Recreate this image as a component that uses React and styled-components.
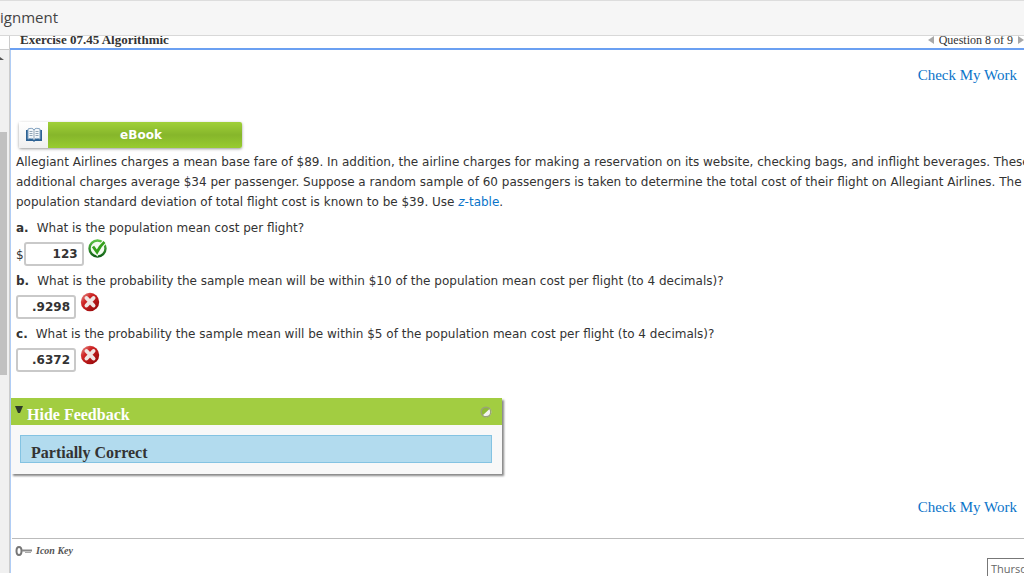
import React, { useState } from 'react';
import styled, { createGlobalStyle } from 'styled-components';

const questions = [
  {
    id: 'a',
    text: 'What is the population mean cost per flight?',
    prefix: '$',
    value: '123',
    correct: true,
  },
  {
    id: 'b',
    text: 'What is the probability the sample mean will be within $10 of the population mean cost per flight (to 4 decimals)?',
    value: '.9298',
    correct: false,
  },
  {
    id: 'c',
    text: 'What is the probability the sample mean will be within $5 of the population mean cost per flight (to 4 decimals)?',
    value: '.6372',
    correct: false,
  },
];

const BookIcon = () => (
  <svg width="18" height="16" viewBox="0 0 18 16" aria-hidden="true">
    <path d="M1 3h2v9h5l1 1 1-1h5V3h2v11h-7l-1 1-1-1H1z" fill="#2d6294" />
    <path d="M3 2c3-1 5-1 6 1 1-2 3-2 6-1v10c-3-1-5-1-6 1-1-2-3-2-6-1z" fill="#f4f7fa" stroke="#7fa0bf" />
    <path d="M9 3v9M4.500 4.500h3M4.500 6.500h3M4.500 8.500h3M10.500 4.500h3M10.500 6.500h3M10.500 8.500h3" stroke="#93a5b6" fill="none" />
  </svg>
);

const CorrectIcon = () => (
  <svg width="20" height="20" viewBox="0 0 20 20" role="img" aria-label="Correct">
    <defs>
      <linearGradient id="ring" x1="0" y1="0" x2="0" y2="1">
        <stop offset="0" stopColor="#5bc144" />
        <stop offset="1" stopColor="#116017" />
      </linearGradient>
    </defs>
    <circle cx="9.500" cy="9.500" r="8" fill="#f5fbf3" stroke="url(#ring)" strokeWidth="2.400" />
    <path d="M5.500 8 9 13Q12 7 16.500 3" fill="none" stroke="#f5fbf3" strokeWidth="5" />
    <path d="M5 7.500 9 13Q12 7 16.500 3" fill="none" stroke="#35a01b" strokeWidth="2.800" />
  </svg>
);

const IncorrectIcon = () => (
  <svg width="20" height="20" viewBox="0 0 20 20" role="img" aria-label="Incorrect">
    <defs>
      <linearGradient id="ball" x1="0" y1="0" x2="1" y2="1">
        <stop offset="0" stopColor="#e9a09c" />
        <stop offset="0.35" stopColor="#cf2525" />
        <stop offset="1" stopColor="#8c0305" />
      </linearGradient>
    </defs>
    <circle cx="10" cy="10" r="9.200" fill="url(#ball)" />
    <path d="M6.500 6l7 7.500M13.500 6l-7 7.500" stroke="#f0e6e4" strokeWidth="4" strokeLinecap="round" />
  </svg>
);

const PartialIcon = () => (
  <svg width="12" height="12" viewBox="0 0 12 12" aria-hidden="true">
    <circle cx="6" cy="6" r="5" fill="#8dba35" />
    <path d="M10 2.500A5 5 0 0 1 2.500 9.500z" fill="#f3f3f0" />
    <circle cx="6" cy="6" r="4.800" fill="none" stroke="#99a377" strokeWidth="1.400" />
  </svg>
);

const KeyIcon = () => (
  <svg width="18" height="12" viewBox="0 0 18 12" aria-hidden="true">
    <ellipse cx="4" cy="6" rx="2.500" ry="4" fill="#fff" stroke="#777" strokeWidth="2" />
    <path d="M7 5.500h10" stroke="#888" strokeWidth="2" fill="none" />
    <path d="M10 7.500h6" stroke="#aaa" fill="none" />
  </svg>
);

const Arrow = ({ flip }) => (
  <svg width="6" height="8" viewBox="0 0 6 8" aria-hidden="true">
    <path d={flip ? 'M0 0v8l6-4z' : 'M6 0v8L0 4z'} fill="#a8a8a8" />
  </svg>
);

const App = () => {
  const [answers, setAnswers] = useState(
    Object.fromEntries(questions.map((q) => [q.id, q.value]))
  );
  const [open, setOpen] = useState(true);

  return (
    <Page>
      <GlobalStyle />
      <TopBar>ignment</TopBar>
      <Main>
        <Rail>
          <RailHead />
          <ScrollTrack>
            <svg width="4" height="3" viewBox="0 0 4 3" aria-hidden="true">
              <path d="M0 0 4 3H0z" fill="#555" />
            </svg>
            <Thumb />
          </ScrollTrack>
        </Rail>
        <Content>
          <QuestionHeader>
            <Exercise>Exercise 07.45 Algorithmic</Exercise>
            <Pager>
              <Arrow />
              <span>Question 8 of 9</span>
              <Arrow flip />
            </Pager>
          </QuestionHeader>
          <Body>
            <CheckRow>
              <CheckLink href="#check">Check My Work</CheckLink>
            </CheckRow>
            <Problem>
              <EbookButton type="button">
                <EbookIcon>
                  <BookIcon />
                </EbookIcon>
                <EbookLabel>eBook</EbookLabel>
              </EbookButton>
              <Paragraph>
                Allegiant Airlines charges a mean base fare of $89. In addition, the airline charges for making a
                reservation on its website, checking bags, and inflight beverages. These
                <br />
                additional charges average $34 per passenger. Suppose a random sample of 60 passengers is taken to
                determine the total cost of their flight on Allegiant Airlines. The
                <br />
                population standard deviation of total flight cost is known to be $39. Use{' '}
                <TextLink href="#z-table">
                  <i>z</i>-table
                </TextLink>
                .
              </Paragraph>
              {questions.map((q) => (
                <Question key={q.id}>
                  <QuestionLabel htmlFor={q.id}>
                    <b>{q.id}.</b>
                    <span>{q.text}</span>
                  </QuestionLabel>
                  <AnswerRow>
                    {q.prefix && <Prefix>{q.prefix}</Prefix>}
                    <Answer
                      id={q.id}
                      type="text"
                      value={answers[q.id]}
                      onChange={(e) => setAnswers({ ...answers, [q.id]: e.target.value })}
                    />
                    <Mark>{q.correct ? <CorrectIcon /> : <IncorrectIcon />}</Mark>
                  </AnswerRow>
                </Question>
              ))}
            </Problem>
            <Feedback>
              <FeedbackToggle type="button" onClick={() => setOpen(!open)}>
                <Caret width="8" height="8" viewBox="0 0 8 8" aria-hidden="true">
                  <path d="M0 0h8L5 7H3z" fill="#2d3a2a" />
                </Caret>
                <FeedbackTitle>{open ? 'Hide' : 'Show'} Feedback</FeedbackTitle>
                <PartialIcon />
              </FeedbackToggle>
              {open && (
                <FeedbackBody>
                  <Result>Partially Correct</Result>
                </FeedbackBody>
              )}
            </Feedback>
            <CheckRow>
              <CheckLink href="#check">Check My Work</CheckLink>
            </CheckRow>
            <Footer>
              <KeyIcon />
              <span>Icon Key</span>
            </Footer>
          </Body>
        </Content>
      </Main>
      <DateTip>Thursday</DateTip>
    </Page>
  );
};

const GlobalStyle = createGlobalStyle`
  body {
    margin: 0;
    background: #fff;
  }

  * {
    box-sizing: border-box;
  }
`;

const Page = styled.div`
  position: relative;
  display: flex;
  flex-direction: column;
  height: 100vh;
  overflow: hidden;
  color: #333;
  font-family: Verdana, 'DejaVu Sans', sans-serif;
  font-size: 12px;
`;

const TopBar = styled.header`
  flex: none;
  padding: 4px 0 6px;
  border-top: 1px solid #ddd;
  border-bottom: 1px solid #d8d8d8;
  background: #f6f6f6;
  color: #444;
  font-family: 'Open Sans', sans-serif;
  font-size: 15px;
  line-height: 24px;
`;

const Main = styled.div`
  flex: 1;
  display: flex;
  min-height: 0;
  padding-bottom: 3px;
`;

const Rail = styled.div`
  flex: none;
  display: flex;
  flex-direction: column;
  width: 10px;
  border-right: 1px solid #ccc;
`;

const RailHead = styled.div`
  height: 14px;
  border-bottom: 1px solid #ccc;
`;

const ScrollTrack = styled.div`
  flex: 1;
  display: flex;
  flex-direction: column;
  gap: 72px;
  padding-top: 7px;
  background: #f0f0f0;
`;

const Thumb = styled.div`
  width: 7px;
  height: 47%;
  background: #c1c1c1;
`;

const Content = styled.main`
  flex: 1;
  display: flex;
  flex-direction: column;
  min-width: 0;
`;

const QuestionHeader = styled.div`
  flex: none;
  display: flex;
  justify-content: space-between;
  align-items: flex-end;
  height: 14px;
  padding-left: 10px;
  overflow: hidden;
  border-bottom: 2px solid #6ba0f2;
  font-family: 'Liberation Serif', serif;
  line-height: 16px;
  white-space: nowrap;
`;

const Exercise = styled.b`
  font-size: 13px;
`;

const Pager = styled.div`
  display: flex;
  align-items: center;
  gap: 5px;
  font-size: 12px;
`;

const Body = styled.div`
  flex: 1;
  min-height: 0;
  overflow: hidden;
  border-left: 1px solid #b0cdf5;
`;

const CheckRow = styled.div`
  display: flex;
  justify-content: flex-end;
  padding: 15px 7px 0;
`;

const CheckLink = styled.a`
  color: #0a74c9;
  font-family: 'Liberation Serif', serif;
  font-size: 15px;
  line-height: 20px;
  text-decoration: none;
`;

const Problem = styled.div`
  padding: 37px 0 0 5px;
`;

const EbookButton = styled.button`
  display: flex;
  width: 223px;
  height: 26px;
  margin: 0 0 4px 3px;
  padding: 0;
  border: 0;
  border-radius: 2px;
  background: none;
  box-shadow: 0 1px 3px #999;
  cursor: pointer;
`;

const EbookIcon = styled.span`
  display: flex;
  align-items: center;
  justify-content: center;
  width: 29px;
  height: 26px;
  background: linear-gradient(#fff, #f0f0f0);
`;

const EbookLabel = styled.span`
  flex: 1;
  padding-right: 8px;
  border-radius: 0 2px 2px 0;
  background: linear-gradient(#a0d038, #86b62b 50%, #98cc30);
  color: #fff;
  font-family: Verdana, 'DejaVu Sans', sans-serif;
  font-size: 12px;
  font-weight: bold;
  line-height: 26px;
`;

const Paragraph = styled.p`
  margin: 0 0 6px;
  line-height: 20px;
  white-space: nowrap;
`;

const TextLink = styled.a`
  color: #0a74c9;
  text-decoration: none;
`;

const Question = styled.div`
  height: 53px;
`;

const QuestionLabel = styled.label`
  display: flex;
  gap: 8px;
  line-height: 20px;
  white-space: nowrap;
`;

const AnswerRow = styled.div`
  display: flex;
  align-items: flex-start;
  padding-top: 1px;
`;

const Prefix = styled.span`
  padding-top: 4px;
  line-height: 24px;
`;

const Answer = styled.input`
  width: 60px;
  height: 24px;
  margin: 3px 4px 0 0;
  padding: 0 4px;
  border: 2px solid #c9c9c9;
  border-radius: 3px;
  background: #fff;
  color: #333;
  font-family: Verdana, 'DejaVu Sans', sans-serif;
  font-size: 12px;
  font-weight: bold;
  text-align: right;
`;

const Mark = styled.span`
  display: flex;
`;

const Feedback = styled.section`
  width: 491px;
  margin: 21px 0 8px;
  background: #f8f8f8;
  box-shadow: 2px 2px 2px #888;
`;

const FeedbackToggle = styled.button`
  display: flex;
  align-items: center;
  width: 100%;
  height: 27px;
  padding: 0 10px 0 4px;
  border: 0;
  background: #a2cd41;
  cursor: pointer;
`;

const Caret = styled.svg`
  align-self: flex-start;
  margin-top: 8px;
`;

const FeedbackTitle = styled.span`
  flex: 1;
  padding: 6px 0 0 4px;
  color: #fff;
  font-family: 'Liberation Serif', serif;
  font-size: 16px;
  font-weight: bold;
  text-align: left;
`;

const FeedbackBody = styled.div`
  padding: 10px 10px 11px 9px;
`;

const Result = styled.div`
  padding: 8px 10px 0;
  border: 1px solid #84c3e2;
  background: #b2dbee;
  font-family: 'Liberation Serif', serif;
  font-size: 16px;
  font-weight: bold;
  line-height: 18px;
`;

const Footer = styled.footer`
  display: flex;
  align-items: center;
  gap: 3px;
  margin: 21px 0 0 1px;
  padding: 5px 3px;
  border-top: 1px solid #bbb;
  color: #555;
  font-family: 'Liberation Serif', serif;
  font-size: 10px;
  font-style: italic;
  font-weight: bold;
  line-height: 14px;
`;

const DateTip = styled.div`
  position: absolute;
  right: 0;
  bottom: 0;
  width: 37px;
  height: 18px;
  padding-left: 3px;
  overflow: hidden;
  border: 1px solid #777;
  border-width: 1px 0 0 1px;
  background: #fff;
  color: #666;
  font-family: 'Open Sans', sans-serif;
  font-size: 11px;
  line-height: 20px;
`;

export default App;
